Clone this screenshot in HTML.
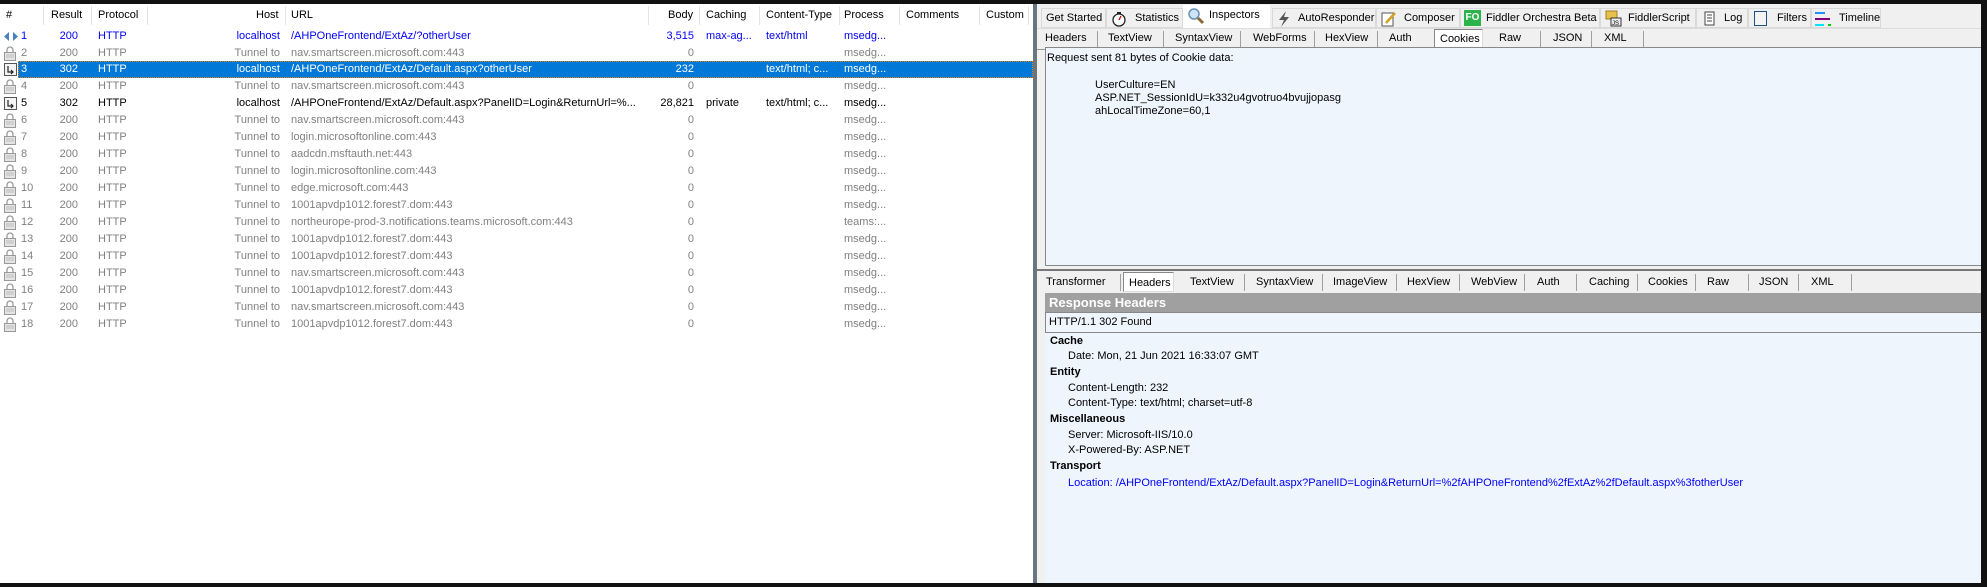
<!DOCTYPE html>
<html><head><meta charset="utf-8"><style>
*{box-sizing:border-box;margin:0;padding:0}
body{width:1987px;height:587px;background:#111;position:relative;overflow:hidden;font-family:"Liberation Sans",sans-serif;font-size:11px;color:#000}
.a{position:absolute;white-space:nowrap}
#left{position:absolute;left:0;top:4px;width:1033px;height:579px;background:#fff}
#div{position:absolute;left:1033px;top:4px;width:4px;height:579px;background:#6b7580}
#right{position:absolute;left:1037px;top:4px;width:944px;height:579px;background:#f0f0f0}
.hdr{position:absolute;left:0;top:0;width:1033px;height:23px;background:#fff}
.hs{position:absolute;top:2px;width:1px;height:19px;background:#e5e5e5}
.row{position:absolute;left:0;width:1033px;height:17px;line-height:17px;color:#808080}
.row span{position:absolute;white-space:nowrap}
.r{text-align:right}
.sel{background:#0078d7;color:#fff}
.blue{color:#0000ff}
.blk{color:#000}
.tab{position:absolute;height:20px;line-height:19px;white-space:nowrap}
.sep{position:absolute;width:1px;height:17px;background:#a0a0a0}
</style></head><body>
<div id="left">
 <div class="hdr">
  <span class="a" style="left:6px;top:5px">#</span>
  <span class="a" style="left:51px;top:5px">Result</span>
  <span class="a" style="left:98px;top:5px">Protocol</span>
  <span class="a" style="left:256px;top:5px">Host</span>
  <span class="a" style="left:291px;top:5px">URL</span>
  <span class="a" style="left:668px;top:5px">Body</span>
  <span class="a" style="left:706px;top:5px">Caching</span>
  <span class="a" style="left:766px;top:5px">Content-Type</span>
  <span class="a" style="left:844px;top:5px">Process</span>
  <span class="a" style="left:906px;top:5px">Comments</span>
  <span class="a" style="left:986px;top:5px">Custom</span>
  <div class="hs" style="left:43px"></div><div class="hs" style="left:91px"></div><div class="hs" style="left:147px"></div><div class="hs" style="left:285px"></div><div class="hs" style="left:648px"></div><div class="hs" style="left:699px"></div><div class="hs" style="left:759px"></div><div class="hs" style="left:839px"></div><div class="hs" style="left:899px"></div><div class="hs" style="left:979px"></div><div class="hs" style="left:1028px"></div>
 </div>
</div>
<div id="div"></div>
<div id="right">
 <!-- top tabs -->
 <div class="tab" style="left:4px;top:4px;width:65px;border:1px solid #d9d9d9;padding-left:4px">Get Started</div>
 <div class="tab" style="left:69px;top:4px;width:77px;border:1px solid #d9d9d9;padding-left:28px">Statistics</div>
 <svg class="a" style="left:74px;top:7px" width="16" height="16"><circle cx="8" cy="9" r="6" fill="#fff" stroke="#222" stroke-width="1.3"/><path d="M8 9 L10 5" stroke="#c00" stroke-width="1.3"/><rect x="6" y="1" width="4" height="2" fill="#222"/></svg>
 <div class="tab" style="left:146px;top:1px;width:87px;height:23px;background:#fff;padding-left:26px;line-height:21px">Inspectors</div>
 <svg class="a" style="left:150px;top:3px" width="18" height="18"><circle cx="7" cy="7" r="5" fill="#cde4f7" stroke="#6b8fb5" stroke-width="1.5"/><path d="M11 11 L16 16" stroke="#8a6a3a" stroke-width="3"/></svg>
 <div class="tab" style="left:235px;top:4px;width:104px;border:1px solid #d9d9d9;padding-left:25px">AutoResponder</div>
 <svg class="a" style="left:240px;top:7px" width="14" height="16"><path d="M9 0 L2 9 L7 9 L4 16 L12 6 L7 6 Z" fill="#555"/></svg>
 <div class="tab" style="left:339px;top:4px;width:84px;border:1px solid #d9d9d9;padding-left:27px">Composer</div>
 <svg class="a" style="left:344px;top:7px" width="16" height="16"><rect x="1" y="2" width="11" height="13" fill="#fff" stroke="#555"/><path d="M5 12 L14 2" stroke="#d4a020" stroke-width="2.5"/></svg>
 <div class="tab" style="left:423px;top:4px;width:140px;border:1px solid #d9d9d9;padding-left:25px">Fiddler Orchestra Beta</div>
 <div class="a" style="left:427px;top:6px;width:17px;height:16px;background:#2cb34a;color:#fff;font-size:10px;font-weight:bold;line-height:16px;text-align:center">FO</div>
 <div class="tab" style="left:563px;top:4px;width:96px;border:1px solid #d9d9d9;padding-left:27px">FiddlerScript</div>
 <svg class="a" style="left:567px;top:5px" width="18" height="18"><path d="M2 2 H13 V10 H2 Z" fill="#e7c24a" stroke="#a0801a"/><rect x="7" y="9" width="10" height="8" fill="#eee" stroke="#333"/><text x="8" y="16" font-size="6" font-family="Liberation Sans">JS</text></svg>
 <div class="tab" style="left:659px;top:4px;width:52px;border:1px solid #d9d9d9;padding-left:27px">Log</div>
 <svg class="a" style="left:667px;top:7px" width="12" height="16"><rect x="1" y="1" width="9" height="13" fill="#fff" stroke="#444"/><path d="M3 4H8M3 7H8M3 10H8" stroke="#444"/></svg>
 <div class="tab" style="left:711px;top:4px;width:63px;border:1px solid #d9d9d9;padding-left:28px">Filters</div>
 <div class="a" style="left:717px;top:7px;width:13px;height:15px;border:1.5px solid #1e4f86;background:#f4f4f4"></div>
 <div class="tab" style="left:774px;top:4px;width:70px;border:1px solid #d9d9d9;padding-left:27px">Timeline</div>
 <svg class="a" style="left:778px;top:7px" width="18" height="16"><rect x="0" y="1" width="10" height="2" fill="#1e90ff"/><rect x="0" y="7" width="15" height="2" fill="#800080"/><rect x="0" y="13" width="9" height="2" fill="#00e5ff"/><rect x="13" y="13" width="3" height="2" fill="#0c0"/></svg>
 <!-- second row -->
 <div class="a" style="left:0;top:24px;width:944px;height:22px;background:#f0f0f0;border-top:1px solid #ddd;border-bottom:1px solid #999"></div>
 <span class="a" style="left:8px;top:28px">Headers</span><div class="sep" style="left:60px;top:27px"></div>
 <span class="a" style="left:71px;top:28px">TextView</span><div class="sep" style="left:126px;top:27px"></div>
 <span class="a" style="left:138px;top:28px">SyntaxView</span><div class="sep" style="left:203px;top:27px"></div>
 <span class="a" style="left:216px;top:28px">WebForms</span><div class="sep" style="left:277px;top:27px"></div>
 <span class="a" style="left:288px;top:28px">HexView</span><div class="sep" style="left:340px;top:27px"></div>
 <span class="a" style="left:352px;top:28px">Auth</span>
 <div class="a" style="left:397px;top:25px;width:49px;height:19px;background:#fff;border:1px solid #888;border-right-color:#ddd;border-bottom-color:#ddd;padding:3px 0 0 5px">Cookies</div>
 <span class="a" style="left:462px;top:28px">Raw</span><div class="sep" style="left:503px;top:27px"></div>
 <span class="a" style="left:516px;top:28px">JSON</span><div class="sep" style="left:554px;top:27px"></div>
 <span class="a" style="left:567px;top:28px">XML</span><div class="sep" style="left:606px;top:27px"></div>
 <!-- cookie content -->
 <div class="a" style="left:8px;top:43px;width:936px;height:219px;background:#eef5fc;border:1px solid #888;border-right:none"></div>
 <span class="a" style="left:10px;top:48px">Request sent 81 bytes of Cookie data:</span>
 <span class="a" style="left:58px;top:75px">UserCulture=EN</span>
 <span class="a" style="left:58px;top:88px">ASP.NET_SessionIdU=k332u4gvotruo4bvujjopasg</span>
 <span class="a" style="left:58px;top:101px">ahLocalTimeZone=60,1</span>
 <!-- splitter -->
 <div class="a" style="left:0;top:265px;width:944px;height:2px;background:#777"></div>
 <!-- response tabs -->
 <span class="a" style="left:9px;top:272px">Transformer</span><div class="sep" style="left:83px;top:270px"></div>
 <div class="a" style="left:86px;top:268px;width:51px;height:20px;background:#fff;border:1px solid #888;border-right-color:#ddd;border-bottom-color:#ddd;padding:4px 0 0 5px">Headers</div>
 <span class="a" style="left:153px;top:272px">TextView</span><div class="sep" style="left:207px;top:270px"></div>
 <span class="a" style="left:219px;top:272px">SyntaxView</span><div class="sep" style="left:285px;top:270px"></div>
 <span class="a" style="left:296px;top:272px">ImageView</span><div class="sep" style="left:359px;top:270px"></div>
 <span class="a" style="left:370px;top:272px">HexView</span><div class="sep" style="left:422px;top:270px"></div>
 <span class="a" style="left:434px;top:272px">WebView</span><div class="sep" style="left:487px;top:270px"></div>
 <span class="a" style="left:500px;top:272px">Auth</span><div class="sep" style="left:539px;top:270px"></div>
 <span class="a" style="left:552px;top:272px">Caching</span><div class="sep" style="left:600px;top:270px"></div>
 <span class="a" style="left:611px;top:272px">Cookies</span><div class="sep" style="left:658px;top:270px"></div>
 <span class="a" style="left:670px;top:272px">Raw</span><div class="sep" style="left:711px;top:270px"></div>
 <span class="a" style="left:722px;top:272px">JSON</span><div class="sep" style="left:761px;top:270px"></div>
 <span class="a" style="left:774px;top:272px">XML</span><div class="sep" style="left:814px;top:270px"></div>
 <!-- response body -->
 <div class="a" style="left:8px;top:289px;width:936px;height:290px;background:#eef5fc"></div>
 <div class="a" style="left:8px;top:289px;width:936px;height:19px;background:#a0a0a0;color:#fff;font-weight:bold;font-size:13px;line-height:19px;padding-left:4px">Response Headers</div>
 <div class="a" style="left:8px;top:308px;width:936px;height:21px;border:1px solid #888;border-right:none;line-height:19px;padding-left:3px">HTTP/1.1 302 Found</div>
 <span class="a" style="left:13px;top:331px;font-weight:bold">Cache</span>
 <span class="a" style="left:31px;top:346px">Date: Mon, 21 Jun 2021 16:33:07 GMT</span>
 <span class="a" style="left:13px;top:362px;font-weight:bold">Entity</span>
 <span class="a" style="left:31px;top:378px">Content-Length: 232</span>
 <span class="a" style="left:31px;top:393px">Content-Type: text/html; charset=utf-8</span>
 <span class="a" style="left:13px;top:409px;font-weight:bold">Miscellaneous</span>
 <span class="a" style="left:31px;top:425px">Server: Microsoft-IIS/10.0</span>
 <span class="a" style="left:31px;top:440px">X-Powered-By: ASP.NET</span>
 <span class="a" style="left:13px;top:456px;font-weight:bold">Transport</span>
 <span class="a" style="left:31px;top:473px;color:#0000ff">Location: /AHPOneFrontend/ExtAz/Default.aspx?PanelID=Login&amp;ReturnUrl=%2fAHPOneFrontend%2fExtAz%2fDefault.aspx%3fotherUser</span>
</div>
<div id="rows"></div>
<svg width="0" height="0" style="position:absolute"><defs>
<g id="lock"><rect x="1.5" y="6.5" width="11" height="8" fill="#e4e4e4" stroke="#999"/><path d="M4 6.5 V4 a3 3 0 0 1 6 0 V6.5" fill="none" stroke="#999" stroke-width="1.3"/><path d="M3 9H11M3 11H11" stroke="#bbb"/></g>
<g id="redir"><rect x="1.5" y="1.5" width="12" height="12" fill="#f4f4f4" stroke="#555"/><path d="M5 4 V10 H10 M8 8 L10 10 L8 12" fill="none" stroke="#222" stroke-width="1.2"/></g>
</defs></svg>
<div style="position:absolute;left:0;top:0">
<!-- rows generated inline -->
<div class="row blue" style="top:28px"><svg class="a" style="left:3px;top:2px" width="16" height="13"><path d="M1 6.5 L6 2 L6 11 Z M15 6.5 L10 2 L10 11 Z" fill="#4a7fc0"/></svg><span style="left:21px">1</span><span class="r" style="right:955px">200</span><span style="left:98px">HTTP</span><span class="r" style="right:753px">localhost</span><span style="left:291px">/AHPOneFrontend/ExtAz/?otherUser</span><span class="r" style="right:339px">3,515</span><span style="left:706px">max-ag...</span><span style="left:766px">text/html</span><span style="left:844px">msedg...</span></div>
<div class="row" style="top:45px"><svg class="a" style="left:3px;top:1px" width="15" height="16"><use href="#lock"/></svg><span style="left:21px">2</span><span class="r" style="right:955px">200</span><span style="left:98px">HTTP</span><span class="r" style="right:753px">Tunnel to</span><span style="left:291px">nav.smartscreen.microsoft.com:443</span><span class="r" style="right:339px">0</span><span style="left:844px">msedg...</span></div>
<div class="row sel" style="top:61px;left:18px;width:1015px;outline:1px dotted #f08000;outline-offset:-1px"></div>
<div class="row" style="top:61px;color:#fff"><svg class="a" style="left:3px;top:1px" width="15" height="15"><use href="#redir"/></svg><span style="left:21px">3</span><span class="r" style="right:955px">302</span><span style="left:98px">HTTP</span><span class="r" style="right:753px">localhost</span><span style="left:291px">/AHPOneFrontend/ExtAz/Default.aspx?otherUser</span><span class="r" style="right:339px">232</span><span style="left:766px">text/html; c...</span><span style="left:844px">msedg...</span></div>
<div class="row" style="top:78px"><svg class="a" style="left:3px;top:1px" width="15" height="16"><use href="#lock"/></svg><span style="left:21px">4</span><span class="r" style="right:955px">200</span><span style="left:98px">HTTP</span><span class="r" style="right:753px">Tunnel to</span><span style="left:291px">nav.smartscreen.microsoft.com:443</span><span class="r" style="right:339px">0</span><span style="left:844px">msedg...</span></div>
<div class="row blk" style="top:95px"><svg class="a" style="left:3px;top:1px" width="15" height="15"><use href="#redir"/></svg><span style="left:21px">5</span><span class="r" style="right:955px">302</span><span style="left:98px">HTTP</span><span class="r" style="right:753px">localhost</span><span style="left:291px">/AHPOneFrontend/ExtAz/Default.aspx?PanelID=Login&amp;ReturnUrl=%...</span><span class="r" style="right:339px">28,821</span><span style="left:706px">private</span><span style="left:766px">text/html; c...</span><span style="left:844px">msedg...</span></div>
<div class="row" style="top:112px"><svg class="a" style="left:3px;top:1px" width="15" height="16"><use href="#lock"/></svg><span style="left:21px">6</span><span class="r" style="right:955px">200</span><span style="left:98px">HTTP</span><span class="r" style="right:753px">Tunnel to</span><span style="left:291px">nav.smartscreen.microsoft.com:443</span><span class="r" style="right:339px">0</span><span style="left:844px">msedg...</span></div>
<div class="row" style="top:129px"><svg class="a" style="left:3px;top:1px" width="15" height="16"><use href="#lock"/></svg><span style="left:21px">7</span><span class="r" style="right:955px">200</span><span style="left:98px">HTTP</span><span class="r" style="right:753px">Tunnel to</span><span style="left:291px">login.microsoftonline.com:443</span><span class="r" style="right:339px">0</span><span style="left:844px">msedg...</span></div>
<div class="row" style="top:146px"><svg class="a" style="left:3px;top:1px" width="15" height="16"><use href="#lock"/></svg><span style="left:21px">8</span><span class="r" style="right:955px">200</span><span style="left:98px">HTTP</span><span class="r" style="right:753px">Tunnel to</span><span style="left:291px">aadcdn.msftauth.net:443</span><span class="r" style="right:339px">0</span><span style="left:844px">msedg...</span></div>
<div class="row" style="top:163px"><svg class="a" style="left:3px;top:1px" width="15" height="16"><use href="#lock"/></svg><span style="left:21px">9</span><span class="r" style="right:955px">200</span><span style="left:98px">HTTP</span><span class="r" style="right:753px">Tunnel to</span><span style="left:291px">login.microsoftonline.com:443</span><span class="r" style="right:339px">0</span><span style="left:844px">msedg...</span></div>
<div class="row" style="top:180px"><svg class="a" style="left:3px;top:1px" width="15" height="16"><use href="#lock"/></svg><span style="left:21px">10</span><span class="r" style="right:955px">200</span><span style="left:98px">HTTP</span><span class="r" style="right:753px">Tunnel to</span><span style="left:291px">edge.microsoft.com:443</span><span class="r" style="right:339px">0</span><span style="left:844px">msedg...</span></div>
<div class="row" style="top:197px"><svg class="a" style="left:3px;top:1px" width="15" height="16"><use href="#lock"/></svg><span style="left:21px">11</span><span class="r" style="right:955px">200</span><span style="left:98px">HTTP</span><span class="r" style="right:753px">Tunnel to</span><span style="left:291px">1001apvdp1012.forest7.dom:443</span><span class="r" style="right:339px">0</span><span style="left:844px">msedg...</span></div>
<div class="row" style="top:214px"><svg class="a" style="left:3px;top:1px" width="15" height="16"><use href="#lock"/></svg><span style="left:21px">12</span><span class="r" style="right:955px">200</span><span style="left:98px">HTTP</span><span class="r" style="right:753px">Tunnel to</span><span style="left:291px">northeurope-prod-3.notifications.teams.microsoft.com:443</span><span class="r" style="right:339px">0</span><span style="left:844px">teams:...</span></div>
<div class="row" style="top:231px"><svg class="a" style="left:3px;top:1px" width="15" height="16"><use href="#lock"/></svg><span style="left:21px">13</span><span class="r" style="right:955px">200</span><span style="left:98px">HTTP</span><span class="r" style="right:753px">Tunnel to</span><span style="left:291px">1001apvdp1012.forest7.dom:443</span><span class="r" style="right:339px">0</span><span style="left:844px">msedg...</span></div>
<div class="row" style="top:248px"><svg class="a" style="left:3px;top:1px" width="15" height="16"><use href="#lock"/></svg><span style="left:21px">14</span><span class="r" style="right:955px">200</span><span style="left:98px">HTTP</span><span class="r" style="right:753px">Tunnel to</span><span style="left:291px">1001apvdp1012.forest7.dom:443</span><span class="r" style="right:339px">0</span><span style="left:844px">msedg...</span></div>
<div class="row" style="top:265px"><svg class="a" style="left:3px;top:1px" width="15" height="16"><use href="#lock"/></svg><span style="left:21px">15</span><span class="r" style="right:955px">200</span><span style="left:98px">HTTP</span><span class="r" style="right:753px">Tunnel to</span><span style="left:291px">nav.smartscreen.microsoft.com:443</span><span class="r" style="right:339px">0</span><span style="left:844px">msedg...</span></div>
<div class="row" style="top:282px"><svg class="a" style="left:3px;top:1px" width="15" height="16"><use href="#lock"/></svg><span style="left:21px">16</span><span class="r" style="right:955px">200</span><span style="left:98px">HTTP</span><span class="r" style="right:753px">Tunnel to</span><span style="left:291px">1001apvdp1012.forest7.dom:443</span><span class="r" style="right:339px">0</span><span style="left:844px">msedg...</span></div>
<div class="row" style="top:299px"><svg class="a" style="left:3px;top:1px" width="15" height="16"><use href="#lock"/></svg><span style="left:21px">17</span><span class="r" style="right:955px">200</span><span style="left:98px">HTTP</span><span class="r" style="right:753px">Tunnel to</span><span style="left:291px">nav.smartscreen.microsoft.com:443</span><span class="r" style="right:339px">0</span><span style="left:844px">msedg...</span></div>
<div class="row" style="top:316px"><svg class="a" style="left:3px;top:1px" width="15" height="16"><use href="#lock"/></svg><span style="left:21px">18</span><span class="r" style="right:955px">200</span><span style="left:98px">HTTP</span><span class="r" style="right:753px">Tunnel to</span><span style="left:291px">1001apvdp1012.forest7.dom:443</span><span class="r" style="right:339px">0</span><span style="left:844px">msedg...</span></div>
</div>
</body></html>
